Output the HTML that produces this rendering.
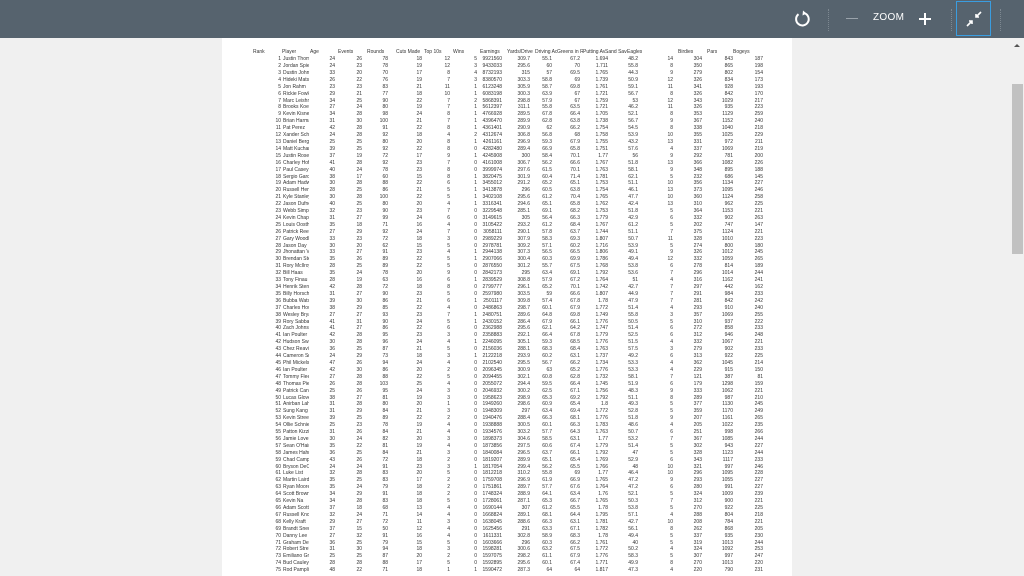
<!DOCTYPE html>
<html><head><meta charset="utf-8"><style>
html,body{margin:0;padding:0;width:1024px;height:576px;overflow:hidden;background:#f0f0f0;font-family:"Liberation Sans",Arial,sans-serif}
#bar{position:absolute;left:0;top:0;width:1024px;height:38px;background:#56636e}
.sep{position:absolute;top:9px;height:22px;border-left:1px dotted #7d8891}
#page{position:absolute;left:222px;top:38px;width:570px;height:538px;background:#fff;overflow:hidden}
.c{position:absolute;top:18.1px;font-size:5px;line-height:6.9px;color:#333;white-space:nowrap}
.r{text-align:right}
.h{position:absolute;top:10.5px;font-size:5px;line-height:7px;color:#333;white-space:nowrap;overflow:hidden}
#sb{position:absolute;left:1012px;top:84px;width:11px;height:170px;background:#c1c1c1}
</style></head><body>
<div id="bar">
 <svg style="position:absolute;left:792px;top:9px" width="20" height="20" viewBox="0 0 20 20"><path d="M6.5 5.2 A6.3 6.3 0 1 0 12.5 4.2" fill="none" stroke="#fff" stroke-width="2"/><path d="M11 1.5 L14.5 4.5 L10.5 6.5 Z" fill="#fff"/></svg>
 <div class="sep" style="left:828px"></div>
 <div style="position:absolute;left:846px;top:18px;width:12px;height:1px;background:#9aa3ab"></div>
 <div style="position:absolute;left:873px;top:12px;font-size:10px;color:#fff;letter-spacing:0.3px">ZOOM</div>
 <div style="position:absolute;left:919px;top:18px;width:12px;height:2px;background:#fff"></div>
 <div style="position:absolute;left:924px;top:13px;width:2px;height:12px;background:#fff"></div>
 <div class="sep" style="left:951px"></div>
 <div style="position:absolute;left:956px;top:1px;width:35px;height:35px;border:1px solid #3a9de0;box-sizing:border-box"></div>
 <svg style="position:absolute;left:965px;top:10px" width="18" height="18" viewBox="0 0 18 18"><path d="M2 16 L7 11 M4 11 L7 11 L7 14 M16 2 L11 7 M11 4 L11 7 L14 7" fill="none" stroke="#fff" stroke-width="1.6"/></svg>
 <div class="sep" style="left:1000px"></div>
</div>
<div style="position:absolute;left:1014px;top:44px;width:0;height:0;border-left:3px solid transparent;border-right:3px solid transparent;border-bottom:3px solid #555"></div>
<div id="sb"></div>
<div id="page">
<div class="h" style="left:31px">Rank</div>
<div class="h" style="left:60px">Player</div>
<div class="h" style="left:88px">Age</div>
<div class="h" style="left:116px">Events</div>
<div class="h" style="left:145px">Rounds</div>
<div class="h" style="left:174px">Cuts Made</div>
<div class="h" style="left:202px">Top 10s</div>
<div class="h" style="left:231px">Wins</div>
<div class="h" style="left:258px;width:27px">Earnings</div>
<div class="h" style="left:285px;width:28px">Yards/Drive</div>
<div class="h" style="left:313px;width:22px">Driving Acc</div>
<div class="h" style="left:335px;width:26px">Greens in Reg</div>
<div class="h" style="left:361px;width:22px">Putting Avg</div>
<div class="h" style="left:383px;width:22px">Sand Save</div>
<div class="h" style="left:405px">Eagles</div>
<div class="h" style="left:456px">Birdies</div>
<div class="h" style="left:485px">Pars</div>
<div class="h" style="left:511px">Bogeys</div>

<div class="c r" style="right:511px">1<br>2<br>3<br>4<br>5<br>6<br>7<br>8<br>9<br>10<br>11<br>12<br>13<br>14<br>15<br>16<br>17<br>18<br>19<br>20<br>21<br>22<br>23<br>24<br>25<br>26<br>27<br>28<br>29<br>30<br>31<br>32<br>33<br>34<br>35<br>36<br>37<br>38<br>39<br>40<br>41<br>42<br>43<br>44<br>45<br>46<br>47<br>48<br>49<br>50<br>51<br>52<br>53<br>54<br>55<br>56<br>57<br>58<br>59<br>60<br>61<br>62<br>63<br>64<br>65<br>66<br>67<br>68<br>69<br>70<br>71<br>72<br>73<br>74<br>75</div>
<div class="c" style="left:61px;width:26px;overflow:hidden">Justin Thomas<br>Jordan Spieth<br>Dustin Johnson<br>Hideki Matsuyama<br>Jon Rahm<br>Rickie Fowler<br>Marc Leishman<br>Brooks Koepka<br>Kevin Kisner<br>Brian Harman<br>Pat Perez<br>Xander Schauffele<br>Daniel Berger<br>Matt Kuchar<br>Justin Rose<br>Charley Hoffman<br>Paul Casey<br>Sergio Garcia<br>Adam Hadwin<br>Russell Henley<br>Kyle Stanley<br>Jason Dufner<br>Webb Simpson<br>Kevin Chappell<br>Louis Oosthuizen<br>Patrick Reed<br>Gary Woodland<br>Jason Day<br>Jhonattan Vegas<br>Brendan Steele<br>Rory McIlroy<br>Bill Haas<br>Tony Finau<br>Henrik Stenson<br>Billy Horschel<br>Bubba Watson<br>Charles Howell<br>Wesley Bryan<br>Rory Sabbatini<br>Zach Johnson<br>Ian Poulter<br>Hudson Swafford<br>Chez Reavie<br>Cameron Smith<br>Phil Mickelson<br>Ian Poulter<br>Tommy Fleetwood<br>Thomas Pieters<br>Patrick Cantlay<br>Lucas Glover<br>Anirban Lahiri<br>Sung Kang<br>Kevin Streelman<br>Ollie Schniederjans<br>Patton Kizzire<br>Jamie Lovemark<br>Sean O'Hair<br>James Hahn<br>Chad Campbell<br>Bryson DeChambeau<br>Luke List<br>Martin Laird<br>Ryan Moore<br>Scott Brown<br>Kevin Na<br>Adam Scott<br>Russell Knox<br>Kelly Kraft<br>Brandt Snedeker<br>Danny Lee<br>Graham DeLaet<br>Robert Streb<br>Emiliano Grillo<br>Bud Cauley<br>Rod Pampling</div>
<div class="c r" style="right:457px">24<br>24<br>33<br>26<br>23<br>29<br>34<br>27<br>34<br>31<br>42<br>24<br>25<br>39<br>37<br>41<br>40<br>38<br>30<br>28<br>30<br>40<br>32<br>31<br>35<br>27<br>33<br>30<br>33<br>35<br>28<br>35<br>28<br>42<br>31<br>39<br>38<br>27<br>41<br>41<br>42<br>30<br>36<br>24<br>47<br>42<br>27<br>26<br>25<br>38<br>31<br>31<br>39<br>25<br>31<br>30<br>35<br>36<br>43<br>24<br>32<br>35<br>35<br>34<br>34<br>37<br>32<br>29<br>37<br>27<br>36<br>31<br>25<br>28<br>48</div>
<div class="c r" style="right:430px">26<br>23<br>20<br>22<br>23<br>21<br>25<br>24<br>28<br>30<br>28<br>28<br>25<br>25<br>19<br>28<br>24<br>17<br>28<br>25<br>28<br>25<br>23<br>27<br>18<br>29<br>23<br>20<br>27<br>26<br>25<br>24<br>19<br>28<br>27<br>30<br>29<br>27<br>31<br>27<br>28<br>28<br>25<br>29<br>26<br>30<br>28<br>28<br>26<br>27<br>28<br>29<br>25<br>23<br>26<br>24<br>22<br>25<br>26<br>24<br>28<br>25<br>24<br>29<br>28<br>18<br>24<br>27<br>15<br>32<br>25<br>30<br>25<br>28<br>22</div>
<div class="c r" style="right:404px">78<br>78<br>70<br>76<br>83<br>77<br>90<br>80<br>98<br>100<br>91<br>92<br>80<br>92<br>72<br>92<br>78<br>60<br>88<br>86<br>100<br>80<br>90<br>99<br>71<br>92<br>72<br>62<br>91<br>89<br>89<br>78<br>63<br>72<br>90<br>86<br>85<br>93<br>90<br>86<br>95<br>96<br>87<br>73<br>94<br>86<br>88<br>103<br>95<br>81<br>80<br>84<br>89<br>78<br>84<br>82<br>81<br>84<br>72<br>91<br>83<br>83<br>79<br>91<br>83<br>68<br>71<br>72<br>50<br>91<br>79<br>94<br>87<br>88<br>71</div>
<div class="c r" style="right:370px">18<br>19<br>17<br>19<br>21<br>18<br>22<br>19<br>24<br>21<br>22<br>18<br>20<br>22<br>17<br>23<br>23<br>15<br>22<br>21<br>22<br>20<br>23<br>24<br>16<br>24<br>18<br>15<br>23<br>22<br>22<br>20<br>16<br>18<br>23<br>21<br>22<br>23<br>24<br>22<br>23<br>24<br>21<br>18<br>24<br>20<br>22<br>25<br>24<br>19<br>20<br>21<br>22<br>19<br>21<br>20<br>19<br>21<br>18<br>23<br>20<br>17<br>18<br>18<br>18<br>13<br>14<br>11<br>12<br>16<br>15<br>18<br>20<br>17<br>18</div>
<div class="c r" style="right:342px">12<br>12<br>8<br>7<br>11<br>10<br>7<br>7<br>8<br>7<br>8<br>4<br>8<br>8<br>9<br>7<br>8<br>8<br>6<br>5<br>5<br>4<br>7<br>6<br>4<br>7<br>3<br>5<br>4<br>5<br>5<br>9<br>6<br>8<br>5<br>6<br>4<br>7<br>5<br>6<br>3<br>4<br>5<br>3<br>4<br>2<br>5<br>4<br>3<br>3<br>1<br>3<br>2<br>4<br>4<br>3<br>4<br>3<br>2<br>3<br>5<br>2<br>2<br>2<br>5<br>4<br>4<br>3<br>4<br>4<br>5<br>3<br>2<br>5<br>1</div>
<div class="c r" style="right:315px">5<br>3<br>4<br>3<br>1<br>1<br>2<br>1<br>1<br>1<br>1<br>2<br>1<br>0<br>1<br>0<br>0<br>1<br>1<br>1<br>1<br>1<br>0<br>0<br>0<br>0<br>0<br>0<br>1<br>1<br>0<br>0<br>1<br>0<br>0<br>1<br>0<br>1<br>1<br>0<br>0<br>1<br>0<br>1<br>0<br>0<br>0<br>0<br>0<br>0<br>0<br>0<br>0<br>0<br>0<br>0<br>0<br>0<br>0<br>1<br>0<br>0<br>0<br>0<br>0<br>0<br>0<br>0<br>0<br>0<br>0<br>0<br>0<br>0<br>1</div>
<div class="c r" style="right:290px">9921560<br>9433033<br>8732193<br>8380570<br>6123248<br>6083198<br>5868391<br>5612397<br>4766928<br>4396470<br>4361401<br>4312674<br>4261161<br>4282480<br>4245908<br>4161008<br>3999974<br>3820475<br>3455012<br>3413878<br>3402108<br>3316341<br>3229548<br>3149615<br>3105422<br>3058111<br>2989229<br>2978781<br>2944138<br>2907066<br>2876550<br>2842173<br>2839529<br>2799777<br>2597980<br>2501117<br>2486863<br>2480751<br>2430152<br>2362988<br>2358883<br>2246095<br>2156036<br>2122218<br>2102540<br>2096345<br>2094455<br>2055072<br>2046932<br>1958623<br>1949260<br>1948309<br>1940476<br>1938888<br>1934576<br>1898373<br>1873856<br>1840084<br>1819207<br>1817054<br>1812218<br>1759708<br>1751861<br>1748324<br>1728061<br>1690144<br>1668824<br>1638045<br>1625456<br>1611331<br>1603666<br>1598281<br>1597075<br>1592895<br>1590472</div>
<div class="c r" style="right:262px">309.7<br>295.6<br>315<br>303.3<br>305.9<br>300.3<br>298.8<br>311.1<br>289.5<br>289.9<br>290.9<br>306.8<br>296.9<br>289.4<br>300<br>306.7<br>297.6<br>301.9<br>291.2<br>296<br>295.6<br>294.6<br>285.1<br>305<br>293.2<br>290.1<br>307.9<br>309.2<br>307.3<br>300.4<br>301.2<br>295<br>308.8<br>296.1<br>303.5<br>309.8<br>298.7<br>289.6<br>286.4<br>295.6<br>292.1<br>305.1<br>288.1<br>293.9<br>295.5<br>300.9<br>302.1<br>294.4<br>300.2<br>298.9<br>298.6<br>297<br>288.4<br>300.5<br>303.2<br>304.6<br>297.5<br>296.5<br>289.9<br>299.4<br>310.2<br>296.9<br>289.7<br>288.9<br>287.1<br>307<br>289.1<br>288.6<br>291<br>302.8<br>296<br>300.6<br>298.2<br>295.6<br>287.3</div>
<div class="c r" style="right:240px">55.1<br>60<br>57<br>58.8<br>58.7<br>63.9<br>57.9<br>55.8<br>67.8<br>62.8<br>62<br>56.8<br>59.3<br>66.9<br>58.4<br>56.2<br>61.5<br>60.4<br>65.2<br>60.5<br>61.2<br>65.1<br>69.1<br>56.4<br>61.2<br>57.8<br>58.3<br>57.1<br>56.5<br>60.3<br>55.7<br>63.4<br>57.9<br>65.2<br>59<br>57.4<br>60.1<br>64.8<br>67.9<br>62.1<br>66.4<br>59.3<br>68.3<br>60.2<br>56.7<br>63<br>60.8<br>59.5<br>62.5<br>65.3<br>60.9<br>63.4<br>66.3<br>60.1<br>57.7<br>58.5<br>60.6<br>63.7<br>65.1<br>56.2<br>55.8<br>61.9<br>57.7<br>64.1<br>65.3<br>61.2<br>68.1<br>66.3<br>63.3<br>58.9<br>60.3<br>63.2<br>61.1<br>60.1<br>64</div>
<div class="c r" style="right:212px">67.2<br>70<br>69.5<br>69<br>69.8<br>67<br>67<br>63.5<br>66.4<br>63.8<br>66.2<br>68<br>67.9<br>65.8<br>70.1<br>66.6<br>70.1<br>71.4<br>65.1<br>63.8<br>70.4<br>65.8<br>68.2<br>66.3<br>68.4<br>63.7<br>69.3<br>60.2<br>66.5<br>69.9<br>67.5<br>69.1<br>67.2<br>70.1<br>66.6<br>67.8<br>67.9<br>69.8<br>66.1<br>64.2<br>67.8<br>68.5<br>68.4<br>63.1<br>66.2<br>65.2<br>62.8<br>66.4<br>67.1<br>69.2<br>65.4<br>69.4<br>68.1<br>66.3<br>64.3<br>63.1<br>67.4<br>66.1<br>65.4<br>65.5<br>69<br>66.9<br>67.6<br>63.4<br>66.7<br>65.5<br>64.4<br>63.1<br>67.1<br>68.3<br>66.2<br>67.5<br>67.9<br>67.4<br>64</div>
<div class="c r" style="right:184px">1.694<br>1.711<br>1.765<br>1.739<br>1.761<br>1.721<br>1.759<br>1.721<br>1.705<br>1.738<br>1.754<br>1.758<br>1.755<br>1.751<br>1.77<br>1.767<br>1.763<br>1.781<br>1.753<br>1.754<br>1.765<br>1.762<br>1.753<br>1.779<br>1.767<br>1.744<br>1.807<br>1.716<br>1.806<br>1.786<br>1.768<br>1.792<br>1.764<br>1.742<br>1.807<br>1.78<br>1.772<br>1.749<br>1.776<br>1.747<br>1.779<br>1.776<br>1.763<br>1.737<br>1.734<br>1.776<br>1.732<br>1.745<br>1.756<br>1.792<br>1.8<br>1.772<br>1.776<br>1.783<br>1.763<br>1.77<br>1.779<br>1.792<br>1.769<br>1.766<br>1.77<br>1.765<br>1.764<br>1.76<br>1.765<br>1.78<br>1.795<br>1.781<br>1.782<br>1.78<br>1.761<br>1.772<br>1.776<br>1.771<br>1.817</div>
<div class="c r" style="right:154px">48.2<br>55.8<br>44.3<br>50.9<br>59.1<br>56.7<br>53<br>46.2<br>52.1<br>56.7<br>54.5<br>53.9<br>43.2<br>57.6<br>56<br>51.8<br>58.1<br>62.1<br>51.1<br>46.1<br>47.7<br>42.4<br>51.8<br>42.9<br>61.2<br>51.1<br>50.7<br>53.9<br>49.1<br>49.4<br>53.8<br>53.6<br>51<br>42.7<br>44.9<br>47.9<br>51.4<br>55.8<br>50.5<br>51.4<br>52.5<br>51.5<br>57.5<br>49.2<br>53.3<br>53.3<br>58.1<br>51.9<br>48.3<br>51.1<br>49.3<br>52.8<br>51.8<br>48.6<br>50.7<br>53.2<br>51.4<br>47<br>52.9<br>48<br>46.4<br>47.2<br>47.2<br>52.1<br>50.3<br>53.8<br>57.1<br>42.7<br>56.1<br>49.4<br>40<br>50.2<br>58.3<br>49.9<br>47.3</div>
<div class="c r" style="right:119px">14<br>8<br>9<br>12<br>11<br>8<br>12<br>11<br>8<br>9<br>8<br>10<br>13<br>4<br>9<br>13<br>9<br>5<br>10<br>13<br>10<br>13<br>5<br>6<br>5<br>7<br>11<br>5<br>9<br>12<br>6<br>7<br>4<br>7<br>7<br>7<br>4<br>3<br>5<br>6<br>6<br>4<br>3<br>6<br>4<br>4<br>7<br>6<br>9<br>8<br>5<br>5<br>9<br>4<br>6<br>7<br>5<br>5<br>6<br>10<br>10<br>9<br>6<br>5<br>7<br>5<br>4<br>10<br>8<br>5<br>5<br>4<br>5<br>8<br>4</div>
<div class="c r" style="right:90px">304<br>350<br>279<br>326<br>341<br>326<br>343<br>326<br>353<br>367<br>338<br>355<br>331<br>337<br>292<br>366<br>348<br>232<br>356<br>373<br>360<br>310<br>364<br>332<br>202<br>375<br>328<br>274<br>326<br>332<br>278<br>296<br>316<br>297<br>291<br>281<br>293<br>357<br>310<br>272<br>312<br>332<br>279<br>313<br>362<br>229<br>121<br>179<br>333<br>289<br>377<br>359<br>207<br>205<br>251<br>367<br>302<br>328<br>343<br>321<br>296<br>293<br>280<br>324<br>312<br>270<br>288<br>208<br>262<br>337<br>319<br>324<br>307<br>270<br>220</div>
<div class="c r" style="right:59px">843<br>865<br>802<br>834<br>928<br>842<br>1029<br>935<br>1129<br>1152<br>1040<br>1025<br>972<br>1069<br>781<br>1082<br>895<br>686<br>1134<br>1095<br>1124<br>962<br>1153<br>902<br>747<br>1124<br>1010<br>800<br>1012<br>1059<br>814<br>1014<br>1162<br>442<br>984<br>842<br>910<br>1069<br>937<br>858<br>946<br>1067<br>902<br>922<br>1045<br>915<br>387<br>1298<br>1062<br>987<br>1130<br>1170<br>1161<br>1022<br>998<br>1085<br>943<br>1123<br>1117<br>997<br>1095<br>1055<br>991<br>1009<br>900<br>922<br>804<br>784<br>868<br>935<br>1013<br>1092<br>997<br>1013<br>790</div>
<div class="c r" style="right:29px">187<br>198<br>154<br>173<br>193<br>170<br>217<br>223<br>259<br>240<br>218<br>229<br>211<br>219<br>200<br>226<br>188<br>145<br>227<br>246<br>258<br>225<br>221<br>263<br>147<br>221<br>223<br>180<br>245<br>265<br>189<br>244<br>241<br>162<br>233<br>242<br>240<br>255<br>222<br>233<br>248<br>221<br>233<br>225<br>214<br>150<br>81<br>159<br>221<br>210<br>245<br>249<br>265<br>235<br>266<br>244<br>227<br>244<br>233<br>246<br>228<br>227<br>227<br>239<br>221<br>225<br>218<br>221<br>205<br>230<br>244<br>253<br>247<br>220<br>231</div>
</div>
</body></html>
